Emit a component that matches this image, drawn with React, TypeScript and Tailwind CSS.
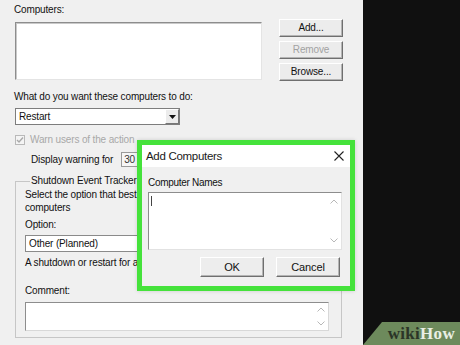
import React from "react";

const Chevron = ({ up }: { up?: boolean }) => (
  <svg width="8" height="5" viewBox="0 0 8 5" className="block">
    <path d={up ? "M0.5 4.5 L4 1 L7.5 4.5" : "M0.5 0.5 L4 4 L7.5 0.5"} fill="none" stroke="#b8b8b8" strokeWidth="1" />
  </svg>
);

const ClassicBtn = ({ label, disabled }: { label: string; disabled?: boolean }) => (
  <div
    className={
      "h-[18px] w-[64px] flex items-center justify-center bg-[#ececec] border border-t-white border-l-white border-r-[#6f6f6f] border-b-[#6f6f6f] shadow-[inset_-1px_-1px_0_#b4b4b4] text-[10px] leading-[12px] " +
      (disabled ? "text-[#a2a2a2]" : "text-[#111]")
    }
  >
    {label}
  </div>
);

const DialogBtn = ({ label }: { label: string }) => (
  <div className="h-[20px] w-[64px] flex items-center justify-center bg-[#ededed] border border-t-white border-l-white border-r-[#6f6f6f] border-b-[#6f6f6f] shadow-[inset_-1px_-1px_0_#b4b4b4] text-[11px] leading-[12px] text-[#111]">
    {label}
  </div>
);

export default function App() {
  return (
    <div className="relative w-[460px] h-[345px] flex overflow-hidden font-['Liberation_Sans',Arial,sans-serif] text-[#111] tracking-[-0.15px]">
      {/* main dialog page */}
      <div className="w-[363px] h-full bg-[#f0f0f0] pl-[14px] flex flex-col">
        <div className="flex items-start">
          <div className="flex flex-col">
            <div className="pt-[4px] text-[10px] leading-[12px]">Computers:</div>
            <div className="mt-[6px] ml-[1px] w-[247px] h-[58px] bg-white border border-t-[#8d8d8d] border-l-[#8d8d8d] border-r-[#e4e4e4] border-b-[#e4e4e4] shadow-[inset_1px_1px_0_#c9c9c9]" />
          </div>
          <div className="mt-[19px] ml-[17px] flex flex-col gap-[4px]">
            <ClassicBtn label="Add..." />
            <ClassicBtn label="Remove" disabled />
            <ClassicBtn label="Browse..." />
          </div>
        </div>

        <div className="mt-[10px] text-[10px] leading-[12px]">What do you want these computers to do:</div>

        <div className="mt-[5px] ml-[1px] w-[165px] h-[17px] bg-white border border-[#7d7d7d] flex items-center">
          <span className="flex-1 pl-[3px] text-[10px] leading-[12px]">Restart</span>
          <div className="w-[14px] h-[15px] bg-[#ececec] border border-t-white border-l-white border-r-[#777] border-b-[#777] flex items-center justify-center">
            <svg width="7" height="4" viewBox="0 0 7 4">
              <path d="M0 0 H7 L3.5 4 Z" fill="#111" />
            </svg>
          </div>
        </div>

        <div className="mt-[9px] ml-[1px] h-[12px] flex items-center">
          <div className="w-[10px] h-[10px] border border-[#b9b9b9] bg-[#f4f4f4] flex items-center justify-center">
            <svg width="8" height="8" viewBox="0 0 8 8">
              <path d="M1 4 L3 6 L7 1.5" fill="none" stroke="#a9a9a9" strokeWidth="1.4" />
            </svg>
          </div>
          <span className="ml-[5px] text-[10px] leading-[12px] text-[#a8a8a8]">Warn users of the action</span>
        </div>

        <div className="mt-[6px] ml-[17px] h-[15px] flex items-center">
          <span className="text-[10px] leading-[12px]">Display warning for</span>
          <div className="ml-[8px] w-[44px] h-[15px] bg-[#f6f6f6] border border-[#9a9a9a] flex items-center pl-[2px] text-[10px] leading-[12px] text-[#333]">
            30
          </div>
        </div>

        <fieldset className="mt-[8px] ml-[1px] w-[327px] border border-[#c6c6c6] pl-[9px] pb-[6px]">
          <legend className="ml-[5px] px-[1px] text-[10px] leading-[12px]">Shutdown Event Tracker</legend>
          <div className="mt-[1px] text-[10px] leading-[13px]">
            Select the option that best describes why you want to shut down these
            <br />
            computers
          </div>
          <div className="mt-[5px] text-[10px] leading-[12px]">Option:</div>
          <div className="mt-[4px] w-[300px] h-[17px] bg-white border border-[#8a8a8a] flex items-center pl-[3px] text-[10px] leading-[12px]">
            Other (Planned)
          </div>
          <div className="mt-[5px] text-[10px] leading-[12px]">A shutdown or restart for a planned reason</div>
          <div className="mt-[16px] text-[10px] leading-[12px]">Comment:</div>
          <div className="mt-[5px] w-[304px] h-[29px] bg-white border border-t-[#8d8d8d] border-l-[#8d8d8d] border-r-[#d8d8d8] border-b-[#d8d8d8] flex justify-end">
            <div className="w-[14px] flex flex-col justify-between items-center py-[4px]">
              <Chevron up />
              <Chevron />
            </div>
          </div>
        </fieldset>
      </div>
      <div className="flex-1 h-full bg-[#101010]" />

      {/* Add Computers dialog overlay */}
      <div className="absolute left-[137px] top-[140px] w-[218px] h-[151px] border-[5px] border-[#45e23b] bg-[#f0f0f0] flex flex-col shadow-[0_0_4px_rgba(0,0,0,0.15)]">
        <div className="h-[22px] bg-white flex items-center justify-between pl-[4px] pr-[6px]">
          <span className="text-[11.5px] leading-[14px] text-[#1a1a1a] tracking-[-0.3px]">Add Computers</span>
          <svg width="10" height="10" viewBox="0 0 10 10">
            <path d="M0.5 0.5 L9.5 9.5 M9.5 0.5 L0.5 9.5" stroke="#222" strokeWidth="1.1" />
          </svg>
        </div>
        <div className="pl-[6px] pr-[8px] pt-[10px] flex flex-col">
          <div className="text-[10px] leading-[12px] tracking-[-0.3px]">Computer Names</div>
          <div className="mt-[3px] h-[58px] bg-white border border-t-[#8d8d8d] border-l-[#8d8d8d] border-r-[#e2e2e2] border-b-[#e2e2e2] flex justify-between">
            <div className="ml-[2px] mt-[3px] w-[1px] h-[10px] bg-[#444]" />
            <div className="w-[14px] flex flex-col justify-between items-center py-[6px]">
              <Chevron up />
              <Chevron />
            </div>
          </div>
          <div className="mt-[7px] flex justify-end gap-[12px] pr-[2px]">
            <DialogBtn label="OK" />
            <DialogBtn label="Cancel" />
          </div>
        </div>
      </div>

      {/* wikiHow badge */}
      <div className="absolute right-0 bottom-0 w-[97px] h-[23px] bg-[#6d8a5c] [clip-path:polygon(19px_0,100%_0,100%_100%,0_100%)] flex items-center justify-end pr-[5px] font-['Liberation_Serif',serif] font-bold text-[17px] leading-[18px] tracking-[0.3px]">
        <span className="text-[#2b3527]">wiki</span>
        <span className="text-[#e9efe4]">How</span>
      </div>
    </div>
  );
}
